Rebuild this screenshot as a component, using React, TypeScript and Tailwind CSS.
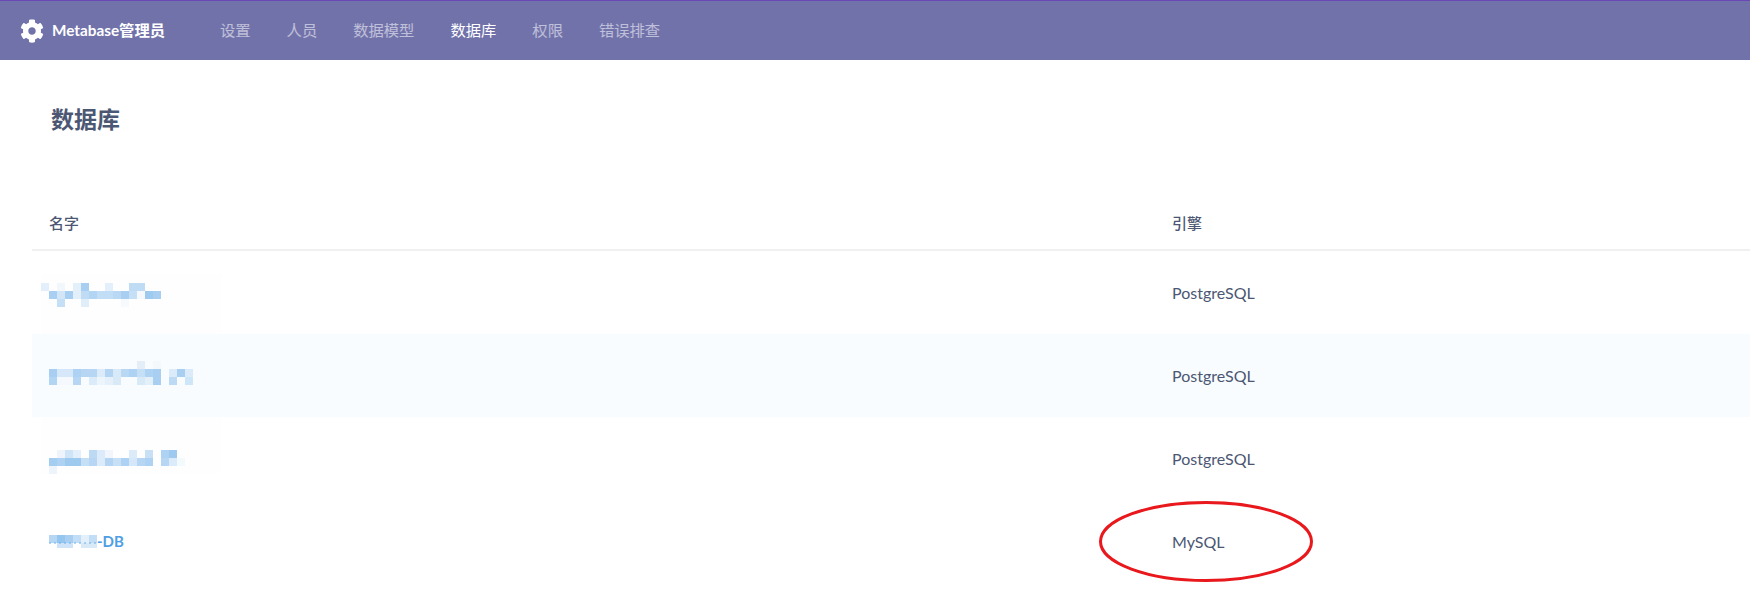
import React from "react";
import { FaCog } from "react-icons/fa";

const FONT = "font-['Lato','Noto_Sans_CJK_SC','Noto_Sans',sans-serif]";

type Band = [number, string[]];

// each band: top offset inside the row, then cell colours from x = 0 (8px cells); "" is a gap
const ROW1: Band[] = [
  [32, ["#e3effa", "", "#f2f7fc", "", "#e3f0fa", "#a8cff2", "", "", "#e3effa", "", "", "#c0dcf5", "#c0dcf5"]],
  [40, ["", "#a9d0f2", "#d2e6f8", "#a8cff2", "#e3f0fb", "#c0dcf5", "#b2d5f3", "#c2def6", "#c2def6", "#b9d8f4", "#a8cff2", "#c4dff6", "#f5f9fd", "#9fcaf0", "#a8cff2"]],
  [48, ["", "", "#c4dff6", "", "", "#e0eefa", "", "", "", "", "#f6fafc"]],
];
const ROW2: Band[] = [
  [27, ["", "", "", "", "", "", "", "", "", "", "", "", "#e3eef9", "", "#f3f8fd"]],
  [35, ["", "#a8cff2", "#d5e7f8", "#d5e7f8", "#aed2f3", "#b6d6f4", "#b6d6f4", "#dcebf9", "#b3d4f3", "#d8e9f8", "#b9d8f4", "#aed2f3", "#c4dff6", "#aed2f3", "#a8cff2", "", "#dcebf9", "#a8cff2", "#dcebf9"]],
  [43, ["", "#b2d5f3", "#f5f9fd", "#f5f9fd", "#b6d6f4", "", "#dcebf9", "#edf5fc", "#e6f0fb", "#d8e9f8", "", "", "#d8e9f8", "#e3eff9", "#a8cff2", "", "#bcdaf4", "", "#cfe5f8"]],
];
const ROW3: Band[] = [
  [33, ["", "", "#eff4fc", "#d0e4f7", "#e3effa", "", "#bcdaf4", "#dcebf9", "#f2f6fc", "", "", "#dcebf9", "", "#c8e0f6", "", "#aed2f3", "#9fcaf0"]],
  [41, ["", "#a3cdf1", "#aed2f3", "#9fcaf0", "#9fcaf0", "#c4dff6", "#b6d6f4", "#dcebf9", "#b3d4f3", "#c8e0f6", "#aed2f3", "#d5e7f8", "#b6d6f4", "#aed2f3", "", "#b6d6f4", "#dcebf9", "#f3fafd"]],
  [49, ["", "#eef4fb"]],
];

function Mosaic({ bands, haze }: { bands: Band[]; haze?: [number, number] }) {
  return (
    <svg width="190" height="83" viewBox="0 0 190 83" className="block ml-[9px]">
      {haze && <rect x="0" y={haze[0]} width="180" height={haze[1]} fill="#fefefe" />}
      {bands.map(([y, cells]) =>
        cells.map((c, i) => (c ? <rect key={`${y}-${i}`} x={i * 8} y={y} width="8" height="8" fill={c} /> : null))
      )}
    </svg>
  );
}

function NavItem({ label, active }: { label: string; active?: boolean }) {
  return <span className={active ? "text-white" : "text-white/55"}>{label}</span>;
}

function Row({ engine, band, children }: { engine: string; band?: boolean; children: React.ReactNode }) {
  return (
    <div className={`grid grid-cols-[1124px_1fr] items-center h-[83px] ${band ? "bg-[#f9fcff]" : ""}`}>
      <div>{children}</div>
      <div className="pl-4 text-[16px] text-[#4c5773]">{engine}</div>
    </div>
  );
}

export default function App() {
  return (
    <div className={`${FONT} relative w-[1750px] h-[590px] overflow-hidden bg-white`}>
      <header className="flex items-center h-[60px] border-t border-[#6a46b6] bg-[#7172aa]">
        <div className="flex items-center ml-[20px] w-[200px] gap-[8px] text-[15.3px] font-bold text-white">
          <FaCog className="w-[24px] h-[24px]" />
          <span>Metabase管理员</span>
        </div>
        <nav className="flex items-center gap-[36px] text-[15.3px]">
          <NavItem label="设置" />
          <NavItem label="人员" />
          <NavItem label="数据模型" />
          <NavItem label="数据库" active />
          <NavItem label="权限" />
          <NavItem label="错误排查" />
        </nav>
      </header>

      <main className="pl-[32px]">
        <h1 className="ml-[19px] pt-[43px] text-[23px] leading-[32px] font-semibold text-[#4c5773]">数据库</h1>

        <div className="grid grid-cols-[1124px_1fr] items-center mt-[46px] h-[70px] pt-[16px] border-b-2 border-[#f0f0f1] text-[15px] font-medium text-[#4c5773]">
          <div className="pl-[17px]">名字</div>
          <div className="pl-4">引擎</div>
        </div>

        <Row engine="PostgreSQL">
          <Mosaic bands={ROW1} haze={[23, 60]} />
        </Row>
        <Row engine="PostgreSQL" band>
          <Mosaic bands={ROW2} />
        </Row>
        <Row engine="PostgreSQL">
          <Mosaic bands={ROW3} haze={[0, 56]} />
        </Row>
        <Row engine="MySQL">
          <div className="flex items-center pl-[17px] text-[15px] font-bold text-[#509ee3]">
            <svg width="48" height="14" viewBox="0 0 48 14" className="block">
              <rect x="0" y="0" width="8" height="8" fill="#b5d7f4" />
              <rect x="8" y="0" width="8" height="8" fill="#95c6ef" />
              <rect x="16" y="0" width="8" height="8" fill="#a8cff2" />
              <rect x="24" y="0" width="8" height="8" fill="#c2def6" />
              <rect x="32" y="0" width="8" height="8" fill="#e3effa" />
              <rect x="40" y="0" width="8" height="8" fill="#c2def6" />
              <rect x="8" y="8" width="16" height="5" fill="#cfe4f8" />
              <rect x="32" y="8" width="16" height="5" fill="#d8e9f8" />
              <line x1="0" y1="8" x2="48" y2="8" stroke="#6aaee8" strokeWidth="1" strokeDasharray="2 3" />
            </svg>
            <span>-DB</span>
          </div>
        </Row>
      </main>

      <svg width="220" height="86" viewBox="0 0 220 86" className="absolute left-[1096px] top-[498px]">
        <ellipse cx="110" cy="43.5" rx="105.5" ry="39" fill="none" stroke="#e8181c" strokeWidth="3" />
      </svg>
    </div>
  );
}
